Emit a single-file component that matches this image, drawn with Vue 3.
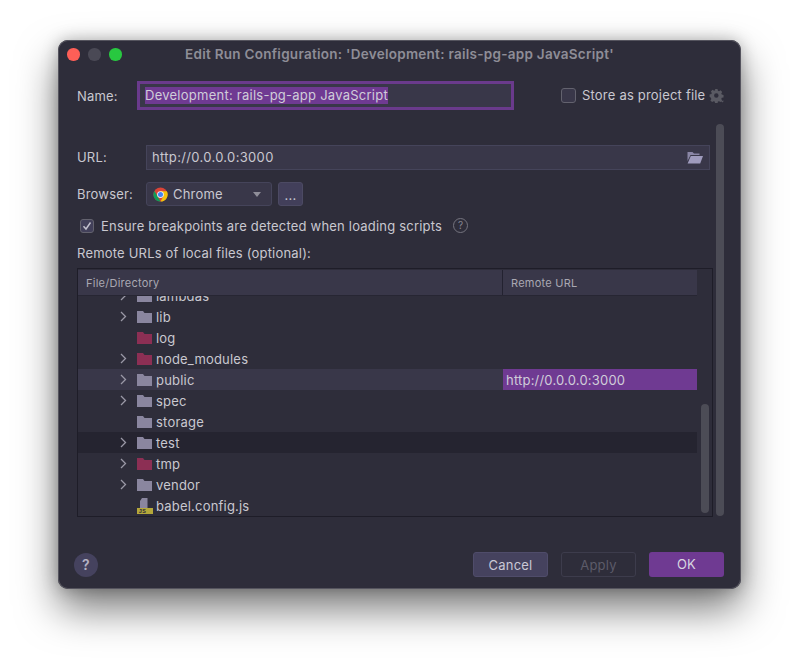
<script setup>
const rows = [
  { name: 'lambdas', arrow: true, kind: 'folder' },
  { name: 'lib', arrow: true, kind: 'folder' },
  { name: 'log', arrow: false, kind: 'red' },
  { name: 'node_modules', arrow: true, kind: 'red' },
  { name: 'public', arrow: true, kind: 'folder', state: 'selected', url: 'http://0.0.0.0:3000' },
  { name: 'spec', arrow: true, kind: 'folder' },
  { name: 'storage', arrow: false, kind: 'folder' },
  { name: 'test', arrow: true, kind: 'folder', state: 'striped' },
  { name: 'tmp', arrow: true, kind: 'red' },
  { name: 'vendor', arrow: true, kind: 'folder' },
  { name: 'babel.config.js', arrow: false, kind: 'js' }
]
</script>

<template>
  <div class="page">
    <div class="window">
      <header class="titlebar">
        <div class="lights">
          <span class="light red"></span>
          <span class="light grey"></span>
          <span class="light green"></span>
        </div>
        <div class="title">Edit Run Configuration: 'Development: rails-pg-app JavaScript'</div>
      </header>

      <div class="name-row">
        <label class="name-label">Name:</label>
        <div class="name-input"><span class="selection">Development: rails-pg-app JavaScript</span></div>
        <span class="checkbox store-box"></span>
        <span class="store-text">Store as project file</span>
        <svg class="gear" width="15" height="15" viewBox="0 0 16 16">
          <path fill="#5a5a63" fill-rule="evenodd" d="M6.500 1h2.600l.4 1.900 1.200.5 1.600-1 1.800 1.800-1 1.600.5 1.200 1.900.4v2.600l-1.900.4-.5 1.200 1 1.600-1.800 1.800-1.600-1-1.200.5-.4 1.900H6.500l-.4-1.900-1.200-.5-1.600 1-1.800-1.800 1-1.600-.5-1.200L.6 9.400V6.800l1.900-.4.5-1.200-1-1.600 1.800-1.800 1.600 1 1.200-.5zM7.800 5.700a2.400 2.400 0 1 0 0 4.800 2.400 2.400 0 0 0 0-4.800z"/>
          <path fill="#5a5a63" d="M12.500 13.500H16l-1.750 2z"/>
        </svg>
      </div>

      <div class="form">
        <div class="form-row url-row">
          <label class="label url-label">URL:</label>
          <div class="url-input">
            <span class="url-text">http://0.0.0.0:3000</span>
            <svg width="16" height="13" viewBox="0 0 16 13">
              <path fill="#8a86a6" d="M.5 1h5L7 2.500h5.500V4h-9L.5 10z"/>
              <path fill="#9f9bbd" d="M3.800 5H16l-2.800 7.500H.6z"/>
            </svg>
          </div>
        </div>

        <div class="form-row browser-row">
          <label class="label">Browser:</label>
          <div class="combo">
            <svg width="15" height="15" viewBox="0 0 16 16">
              <circle cx="8" cy="8" r="7.500" fill="#db4437"/>
              <path fill="#0f9d58" d="M1.500 4.200 5 10l3 5.500A7.500 7.500 0 0 1 1.500 4.200z"/>
              <path fill="#f4c20d" d="M8 4.500h6.800A7.500 7.500 0 0 1 8 15.500l3.200-6z"/>
              <circle cx="8" cy="8" r="3.600" fill="#f1f1f1"/>
              <circle cx="8" cy="8" r="2.700" fill="#4285f4"/>
            </svg>
            <span class="combo-text">Chrome</span>
            <span class="caret"></span>
          </div>
          <div class="dots">...</div>
        </div>

        <div class="ensure-row">
          <span class="checkbox checked">
            <svg width="12" height="12" viewBox="0 0 12 12"><path d="M2.500 6.200 5 9l4.500-6.500" fill="none" stroke="#c4c2cf" stroke-width="1.400"/></svg>
          </span>
          <span class="ensure-text">Ensure breakpoints are detected when loading scripts</span>
          <span class="help-small">?</span>
        </div>

        <div class="remote-label">Remote URLs of local files (optional):</div>

        <div class="table">
          <div class="thead">
            <div class="th col-file">File/Directory</div>
            <div class="th col-url">Remote URL</div>
          </div>
          <div class="tbody">
            <div v-for="row in rows" :key="row.name" class="tr" :class="row.state">
              <div class="cell-file">
                <span class="arrow-slot">
                  <svg v-if="row.arrow" width="7" height="11" viewBox="0 0 7 11"><path d="M1 1l4.500 4.500L1 10" fill="none" stroke="#9a98a6" stroke-width="1.300"/></svg>
                </span>
                <svg v-if="row.kind !== 'js'" class="icon" width="15" height="12" viewBox="0 0 15 12">
                  <path :fill="row.kind === 'red' ? '#8c2f54' : '#8a869f'" d="M0 0h6l1.500 2H15v10H0z"/>
                </svg>
                <svg v-else class="icon js-icon" width="16" height="16" viewBox="0 0 16 16">
                  <path fill="#8a869f" d="M5 0h5.500v10H3V3z"/>
                  <rect x="0" y="10" width="16" height="6" fill="#b5a83a"/>
                  <text x="1.500" y="15" font-size="6" font-weight="700" fill="#2e2d3a" font-family="Liberation Mono, monospace">JS</text>
                </svg>
                <span class="file-name">{{ row.name }}</span>
              </div>
              <div class="cell-url">{{ row.url }}</div>
            </div>
          </div>
          <div class="inner-scroll"></div>
        </div>
      </div>

      <div class="outer-scroll"></div>

      <footer class="footer">
        <div class="help">?</div>
        <div class="buttons">
          <div class="btn cancel">Cancel</div>
          <div class="btn apply">Apply</div>
          <div class="btn ok">OK</div>
        </div>
      </footer>
    </div>
  </div>
</template>

<style scoped>
.page {
  width: 799px;
  height: 666px;
  box-sizing: border-box;
  padding: 40px 58px 0;
  background: #fff;
  overflow: hidden;
  font-family: Inter, "Liberation Sans", sans-serif;
  font-size: 13px;
  letter-spacing: 0.2px;
  color: #c9c8d0;
}
.window {
  position: relative;
  width: 683px;
  height: 549px;
  box-sizing: border-box;
  display: flex;
  flex-direction: column;
  background: #2e2d3a;
  border-radius: 10px;
  box-shadow: 0 0 0 1px #55545e inset, 0 20px 40px rgba(0, 0, 0, 0.52), 0 0 16px rgba(0, 0, 0, 0.25);
}
.titlebar {
  position: relative;
  height: 28px;
  display: flex;
  align-items: center;
  justify-content: center;
}
.lights {
  position: absolute;
  left: 9px;
  top: 8px;
  display: flex;
  gap: 8.500px;
}
.light {
  width: 12.500px;
  height: 12.500px;
  border-radius: 50%;
}
.red { background: #fe5f57; }
.grey { background: #4a4955; }
.green { background: #28c840; }
.title {
  font-size: 13.500px;
  letter-spacing: 0.27px;
  font-weight: 600;
  color: #8e8d97;
}
.name-row {
  display: flex;
  align-items: center;
  height: 29px;
  margin-top: 13px;
  padding-left: 19px;
}
.name-label { width: 60px; }
.name-input {
  width: 377px;
  height: 29px;
  box-sizing: border-box;
  border: 3px solid #6a3a8c;
  background: #393749;
  padding: 3px 5px;
  display: flex;
  align-items: center;
}
.selection {
  background: #6f3a92;
  color: #cfcdd9;
  line-height: 17px;
  letter-spacing: 0.25px;
}
.checkbox {
  width: 15px;
  height: 15px;
  box-sizing: border-box;
  border: 1px solid #63626e;
  border-radius: 3px;
  background: #393749;
  display: flex;
  align-items: center;
  justify-content: center;
}
.store-box { margin-left: 47px; margin-bottom: 1px; }
.store-text { margin-left: 6px; padding-bottom: 2px; }
.gear { margin-left: 4px; }
.form {
  display: flex;
  flex-direction: column;
  padding: 35px 0 0 19px;
}
.form-row {
  display: flex;
  align-items: center;
}
.label { width: 69px; }
.url-label { padding-bottom: 1px; }
.url-row { height: 25px; }
.url-input {
  width: 564px;
  height: 25px;
  box-sizing: border-box;
  border: 1px solid #45445a;
  background: #393749;
  padding: 0 6px 0 5px;
  display: flex;
  align-items: center;
  justify-content: space-between;
}
.url-text { padding-bottom: 2px; letter-spacing: 0.33px; }
.browser-row {
  height: 24px;
  margin-top: 12px;
}
.combo {
  width: 126px;
  height: 24px;
  box-sizing: border-box;
  border: 1px solid #45445a;
  border-radius: 3px;
  background: #393749;
  display: flex;
  align-items: center;
  padding: 0 10px 0 6px;
}
.combo-text { margin-left: 5px; flex: 1; }
.caret {
  width: 0;
  height: 0;
  border-left: 4.500px solid transparent;
  border-right: 4.500px solid transparent;
  border-top: 5px solid #8f8e99;
}
.dots {
  width: 25px;
  height: 24px;
  margin-left: 6px;
  box-sizing: border-box;
  border: 1px solid #4c4a63;
  border-radius: 3px;
  background: #423f5a;
  text-align: center;
  line-height: 24px;
  font-size: 13px;
}
.ensure-row {
  display: flex;
  align-items: center;
  height: 15px;
  margin-top: 12px;
  padding-left: 3px;
}
.checked { background: #42405a; width: 14px; height: 14px; }
.ensure-text { margin-left: 7px; }
.help-small {
  width: 13px;
  height: 13px;
  margin-left: 11px;
  border: 1px solid #75747f;
  border-radius: 50%;
  font-size: 10px;
  line-height: 13px;
  text-align: center;
  color: #85848f;
}
.remote-label {
  height: 16px;
  line-height: 16px;
  margin-top: 12px;
}
.table {
  position: relative;
  width: 636px;
  height: 249px;
  margin-top: 7px;
  box-sizing: border-box;
  border: 1px solid #1e1d28;
  overflow: hidden;
}
.thead {
  width: 619px;
  height: 26px;
  margin-top: 1px;
  display: flex;
  background: #393749;
  border-bottom: 1px solid #272633;
  box-sizing: border-box;
  font-size: 11px;
  letter-spacing: 0.25px;
  color: #a9a8b2;
}
.th {
  display: flex;
  align-items: center;
}
.col-file {
  width: 425px;
  box-sizing: border-box;
  padding-left: 8px;
  border-right: 1px solid #232230;
}
.col-url { padding-left: 8px; }
.tbody {
  height: 221px;
  overflow: hidden;
}
.tr {
  width: 619px;
  height: 21px;
  display: flex;
  align-items: center;
}
.tr:first-child { margin-top: -11px; }
.selected { background: #393749; }
.striped { background: #252430; }
.cell-file {
  width: 425px;
  display: flex;
  align-items: center;
  padding-left: 42px;
  box-sizing: border-box;
}
.arrow-slot {
  width: 17px;
  display: flex;
  align-items: center;
}
.icon { flex: none; }
.file-name { margin-left: 4px; }
.js-icon { margin-top: 1px; margin-right: -1px; }
.cell-url {
  flex: 1;
  height: 21px;
  padding-left: 3px;
  line-height: 23px;
  color: #cfcdd9;
}
.selected .cell-url { background: #6f3a92; }
.inner-scroll {
  position: absolute;
  left: 623px;
  top: 135px;
  width: 8px;
  height: 109px;
  border-radius: 4px;
  background: #4c4c56;
}
.outer-scroll {
  position: absolute;
  left: 658px;
  top: 84px;
  width: 8px;
  height: 392px;
  border-radius: 4px;
  background: #4c4c56;
}
.footer {
  display: flex;
  align-items: center;
  justify-content: space-between;
  height: 25px;
  margin-top: 35px;
  padding: 0 17px 0 16px;
}
.help {
  width: 24px;
  height: 24px;
  border-radius: 50%;
  background: #45425e;
  text-align: center;
  line-height: 24px;
  font-size: 14px;
  font-weight: 600;
  color: #b5b3c4;
}
.buttons {
  display: flex;
  gap: 13px;
}
.btn {
  width: 75px;
  height: 25px;
  box-sizing: border-box;
  border-radius: 3px;
  text-align: center;
  line-height: 24px;
}
.cancel {
  background: #45425e;
  border: 1px solid #4f4c6a;
  color: #c9c8d6;
}
.apply {
  border: 1px solid #3d3c4c;
  color: #5c5b69;
}
.ok {
  background: #6f3a92;
  color: #d8d6e0;
}
</style>
